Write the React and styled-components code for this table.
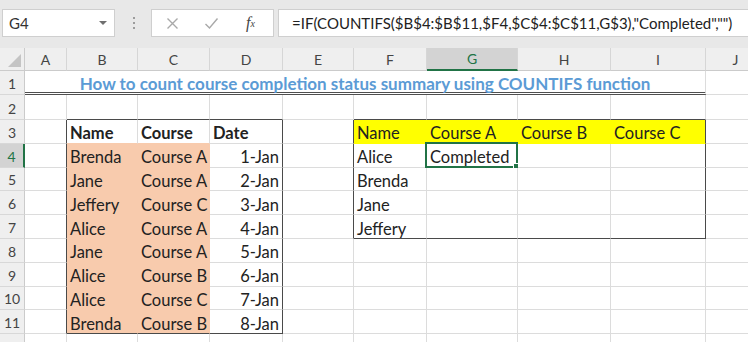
import React from 'react';
import styled, { createGlobalStyle } from 'styled-components';

const GlobalStyle = createGlobalStyle`
  html, body {
    margin: 0;
    padding: 0;
    background: #fff;
  }
  body {
    font-family: 'Lato', 'Open Sans', sans-serif;
    overflow: hidden;
  }
`;

const GREEN = '#217346';
const DARK = '#4a4a4a';
const GRID = '#dcdcdc';

const Window = styled.div`
  width: 748px;
  height: 342px;
  overflow: hidden;
  background: #fff;
`;

const FormulaBar = styled.div`
  display: flex;
  align-items: center;
  height: 48px;
  padding: 9px 0 11px 2px;
  box-sizing: border-box;
  background: #e8e8e8;
`;

const NameBox = styled.div`
  width: 113px;
  height: 28px;
  box-sizing: border-box;
  display: flex;
  align-items: center;
  justify-content: space-between;
  padding: 0 7px 0 6px;
  background: #fff;
  border: 1px solid #cfcfcf;
  font-size: 15px;
  color: #333;
`;

const Caret = styled.span`
  width: 0;
  height: 0;
  border-left: 4px solid transparent;
  border-right: 4px solid transparent;
  border-top: 4px solid #6f6f6f;
`;

const Grip = styled.div`
  display: flex;
  flex-direction: column;
  gap: 3px;
  margin: 0 16px 0 18px;
  span {
    width: 2px;
    height: 2px;
    background: #9c9c9c;
  }
`;

const FxBox = styled.div`
  width: 123px;
  height: 28px;
  box-sizing: border-box;
  display: flex;
  align-items: center;
  padding-left: 1px;
  background: #fff;
  border: 1px solid #cfcfcf;
`;

const FxButton = styled.div`
  width: 39px;
  display: flex;
  align-items: center;
  justify-content: center;
  color: #444;
  font-family: 'Liberation Serif', serif;
  font-style: italic;
  font-size: 16px;
  sub {
    font-size: 10px;
    vertical-align: -1px;
  }
`;

const FormulaInput = styled.div`
  flex: 1;
  height: 28px;
  box-sizing: border-box;
  margin-left: 4px;
  display: flex;
  align-items: center;
  padding-left: 13px;
  background: #fff;
  border: 1px solid #cfcfcf;
  border-right: none;
  font-size: 15px;
  color: #222;
  white-space: nowrap;
  overflow: hidden;
`;

const Sheet = styled.div`
  display: grid;
  grid-template-columns: 25px 42px 71px 72px 73px 71px 73px 91px 93px 95px 60px;
  grid-template-rows: 23px 24px 25px repeat(10, 23.8px);
`;

const Corner = styled.div`
  position: relative;
  background: #efefef;
  border-right: 1px solid #cbcbcb;
  border-bottom: 1px solid #cbcbcb;
  &::after {
    content: '';
    position: absolute;
    right: 3px;
    bottom: 3px;
    border-left: 13px solid transparent;
    border-bottom: 13px solid #c4c4c4;
  }
`;

const ColHead = styled.div`
  display: flex;
  align-items: center;
  justify-content: center;
  background: ${(p) => (p.$active ? '#d3d3d3' : '#efefef')};
  border-right: 1px solid #d6d6d6;
  border-bottom: ${(p) => (p.$active ? `2px solid ${GREEN}` : '1px solid #cbcbcb')};
  color: ${(p) => (p.$active ? GREEN : '#444')};
  font-size: 14px;
`;

const RowHead = styled.div`
  display: flex;
  align-items: center;
  justify-content: center;
  padding-top: 2px;
  background: ${(p) => (p.$active ? '#d3d3d3' : '#efefef')};
  border-right: ${(p) => (p.$active ? `2px solid ${GREEN}` : '1px solid #cbcbcb')};
  border-bottom: 1px solid #d8d8d8;
  color: ${(p) => (p.$active ? GREEN : '#444')};
  font-size: 14px;
`;

const Cell = styled.div`
  position: relative;
  display: flex;
  align-items: center;
  justify-content: ${(p) => (p.$align === 'right' ? 'flex-end' : 'flex-start')};
  padding: 4px 3px 0;
  min-width: 0;
  background: ${(p) => p.$fill || '#fff'};
  border-right: 1px solid ${(p) => p.$right};
  border-bottom: 1px solid ${(p) => p.$bottom};
  font-size: 16.5px;
  font-weight: ${(p) => (p.$bold ? 700 : 400)};
  color: #222;
  white-space: nowrap;
`;

const TitleCell = styled.div`
  grid-column: 2 / 11;
  display: flex;
  align-items: center;
  justify-content: center;
  padding-top: 3px;
  border-bottom: 3px double #4f4f4f;
  border-right: 1px solid ${GRID};
  color: #5b9bd5;
  font-size: 17px;
  font-weight: 700;
  white-space: nowrap;
`;

const Selection = styled.div`
  position: absolute;
  left: -2px;
  top: -2px;
  right: -1px;
  bottom: -1px;
  border: 2px solid ${GREEN};
  pointer-events: none;
  &::after {
    content: '';
    position: absolute;
    right: -4px;
    bottom: -4px;
    width: 5px;
    height: 5px;
    background: ${GREEN};
    border: 1px solid #fff;
  }
`;

const COLS = ['A', 'B', 'C', 'D', 'E', 'F', 'G', 'H', 'I', 'J'];

const records = [
  ['Brenda', 'Course A', '1-Jan'],
  ['Jane', 'Course A', '2-Jan'],
  ['Jeffery', 'Course C', '3-Jan'],
  ['Alice', 'Course A', '4-Jan'],
  ['Jane', 'Course A', '5-Jan'],
  ['Alice', 'Course B', '6-Jan'],
  ['Alice', 'Course C', '7-Jan'],
  ['Brenda', 'Course B', '8-Jan'],
];

const summary = [
  ['Name', 'Course A', 'Course B', 'Course C'],
  ['Alice', 'Completed', '', ''],
  ['Brenda', '', '', ''],
  ['Jane', '', '', ''],
  ['Jeffery', '', '', ''],
];

// column index: 0 = A ... 9 = J
const tables = [
  { left: 1, right: 3, top: 3, bottom: 11 },
  { left: 5, right: 8, top: 3, bottom: 7 },
];

const SALMON = '#f8cbad';
const YELLOW = '#ffff00';

function fillAt(r, c) {
  if (r >= 4 && r <= 11 && (c === 1 || c === 2)) return SALMON;
  if (r === 3 && c >= 5 && c <= 8) return YELLOW;
  return null;
}

function cellAt(r, c) {
  if (r === 3 && c >= 1 && c <= 3) return { text: ['Name', 'Course', 'Date'][c - 1], bold: true };
  if (r >= 4 && r <= 11 && c >= 1 && c <= 3) {
    return { text: records[r - 4][c - 1], align: c === 3 ? 'right' : 'left' };
  }
  if (r >= 3 && r <= 7 && c >= 5 && c <= 8) return { text: summary[r - 3][c - 5] };
  return { text: '' };
}

function rightColor(r, c) {
  const dark = tables.some(
    (t) => r >= t.top && r <= t.bottom && (c === t.right || c + 1 === t.left)
  );
  if (dark) return DARK;
  const f = fillAt(r, c) || fillAt(r, c + 1);
  return f || GRID;
}

function bottomColor(r, c) {
  const dark = tables.some(
    (t) => c >= t.left && c <= t.right && (r === t.bottom || r + 1 === t.top)
  );
  if (dark) return DARK;
  const f = fillAt(r, c) || fillAt(r + 1, c);
  return f || GRID;
}

function CrossIcon() {
  return (
    <svg width="13" height="13" viewBox="0 0 13 13">
      <path d="M1.5 1.5 L11.5 11.5 M11.5 1.5 L1.5 11.5" stroke="#a9a9a9" strokeWidth="1.4" fill="none" />
    </svg>
  );
}

function CheckIcon() {
  return (
    <svg width="15" height="13" viewBox="0 0 15 13">
      <path d="M1.5 7 L5.5 11 L13.5 1.5" stroke="#a9a9a9" strokeWidth="1.4" fill="none" />
    </svg>
  );
}

export default function App() {
  const rows = [];
  for (let r = 1; r <= 12; r++) {
    rows.push(
      <RowHead key={`h${r}`} $active={r === 4}>
        {r}
      </RowHead>
    );
    if (r === 1) {
      rows.push(
        <TitleCell key="title">
          How to count course completion status summary using COUNTIFS function
        </TitleCell>
      );
      rows.push(<Cell key="r1J" $right={GRID} $bottom={GRID} />);
      continue;
    }
    COLS.forEach((_, c) => {
      const info = cellAt(r, c);
      rows.push(
        <Cell
          key={`${r}-${c}`}
          $fill={fillAt(r, c)}
          $bold={info.bold}
          $align={info.align}
          $right={rightColor(r, c)}
          $bottom={bottomColor(r, c)}
        >
          {info.text}
          {r === 4 && c === 6 && <Selection />}
        </Cell>
      );
    });
  }

  return (
    <Window>
      <GlobalStyle />
      <FormulaBar>
        <NameBox>
          G4
          <Caret />
        </NameBox>
        <Grip>
          <span />
          <span />
          <span />
        </Grip>
        <FxBox>
          <FxButton>
            <CrossIcon />
          </FxButton>
          <FxButton>
            <CheckIcon />
          </FxButton>
          <FxButton>
            f<sub>x</sub>
          </FxButton>
        </FxBox>
        <FormulaInput>
          =IF(COUNTIFS($B$4:$B$11,$F4,$C$4:$C$11,G$3),"Completed","")
        </FormulaInput>
      </FormulaBar>
      <Sheet>
        <Corner />
        {COLS.map((l, i) => (
          <ColHead key={l} $active={i === 6}>
            {l}
          </ColHead>
        ))}
        {rows}
      </Sheet>
    </Window>
  );
}
